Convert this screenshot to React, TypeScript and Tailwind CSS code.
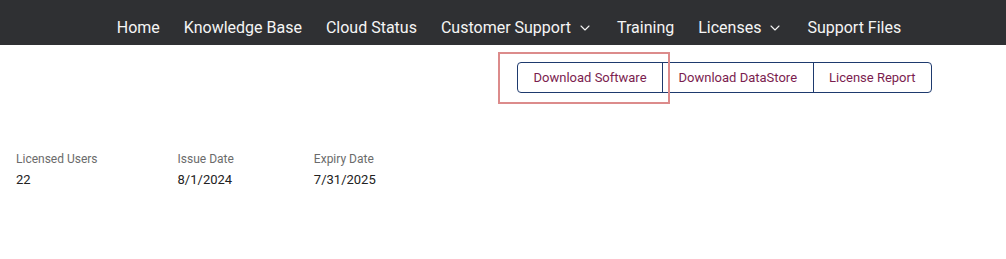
import { ChevronDown } from 'lucide-react'

const navItems = [
  { label: 'Home' },
  { label: 'Knowledge Base' },
  { label: 'Cloud Status' },
  { label: 'Customer Support', menu: true },
  { label: 'Training' },
  { label: 'Licenses', menu: true },
  { label: 'Support Files' },
]

const details = [
  { label: 'Licensed Users', value: '22' },
  { label: 'Issue Date', value: '8/1/2024' },
  { label: 'Expiry Date', value: '7/31/2025' },
]

export default function App() {
  return (
    <div className="min-h-[259px] w-[1006px] bg-white font-['Roboto',sans-serif]">
      <nav className="flex h-[45px] items-center justify-center gap-[24px] bg-[#2f3033] pl-[12px] pt-[10px]">
        {navItems.map((item) => (
          <a key={item.label} className="flex items-center gap-[6px] text-[16px] text-[#f5f5f5]">
            {item.label}
            {item.menu && <ChevronDown className="h-[16px] w-[16px]" strokeWidth={1.6} />}
          </a>
        ))}
      </nav>

      <div className="relative flex justify-end pr-[74px] pt-[17px]">
        <div className="flex h-[31px] rounded-[4px] border border-[#1e3a6e] text-[13px] text-[#7b1d4f]">
          <button type="button" className="px-[15.5px]">Download Software</button>
          <button type="button" className="border-l border-[#1e3a6e] px-[15.5px]">Download DataStore</button>
          <button type="button" className="border-l border-[#1e3a6e] px-[15.5px]">License Report</button>
        </div>
        <div className="absolute left-[498px] top-[7px] h-[52px] w-[172px] border-2 border-[#dc8b8b]" />
      </div>

      <div className="flex gap-[80px] pl-[16px] pt-[57px]">
        {details.map((d) => (
          <div key={d.label} className="flex flex-col">
            <span className="text-[12px] leading-[18px] text-[#6b6b6b]">{d.label}</span>
            <span className="mt-[3px] text-[13px] leading-[18px] text-[#222]">{d.value}</span>
          </div>
        ))}
      </div>
    </div>
  )
}
